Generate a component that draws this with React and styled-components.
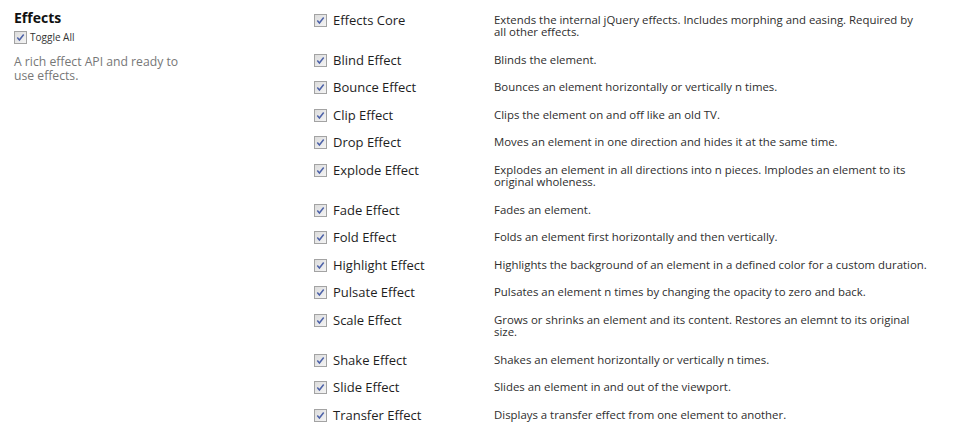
import styled, { createGlobalStyle } from "styled-components";

const GlobalStyle = createGlobalStyle`
  body {
    margin: 0;
    background: #ffffff;
    font-family: "Open Sans", "DejaVu Sans", sans-serif;
    color: #222222;
  }
`;

const Page = styled.div`
  display: grid;
  grid-template-columns: 300px 1fr;
  padding: 6px 0 0 14px;
  width: 960px;
  height: 442px;
  box-sizing: border-box;
`;

const Intro = styled.div`
  display: flex;
  flex-direction: column;
  padding-top: 3px;
`;

const Heading = styled.h2`
  margin: 0;
  font-size: 14px;
  font-weight: 700;
  line-height: 18px;
  color: #111111;
`;

const ToggleLine = styled.label`
  display: flex;
  align-items: center;
  gap: 3px;
  margin-top: 3px;
  font-size: 10px;
  color: #333333;
`;

const Blurb = styled.p`
  margin: 11px 0 0;
  width: 172px;
  font-size: 12.2px;
  line-height: 14px;
  color: #777777;
`;

const List = styled.div`
  display: flex;
  flex-direction: column;
`;

const Row = styled.div`
  display: grid;
  grid-template-columns: 13px 155px 450px;
  column-gap: 6px;
  align-items: start;
  padding: 7.5px 0;
`;

const Label = styled.span`
  font-size: 13px;
  line-height: 12.5px;
  color: #1e1e1e;
  white-space: nowrap;
`;

/* line breaks follow the original page, so they are kept in the data */
const Desc = styled.span`
  font-size: 11.4px;
  line-height: 12.5px;
  color: #2e2e2e;
  white-space: pre-line;
`;

const Box = styled.span`
  display: inline-flex;
  align-items: center;
  justify-content: center;
  width: 13px;
  height: 13px;
  box-sizing: border-box;
  border: 1px solid #a3a3a3;
  background: linear-gradient(135deg, #dcdcdc 0%, #f4f4f4 100%);
  margin-bottom: ${({ $tight }) => ($tight ? "-0.5px" : "0")};
  flex-shrink: 0;
`;

const Check = ({ tight }) => (
  <Box $tight={tight}>
    <svg width="9" height="9" viewBox="0 0 9 9">
      <path d="M1.3 4.6 L3.4 7 L7.7 1.5" fill="none" stroke="#4d62a8" strokeWidth="1.5" />
    </svg>
  </Box>
);

const effects = [
  ["Effects Core", "Extends the internal jQuery effects. Includes morphing and easing. Required by\nall other effects."],
  ["Blind Effect", "Blinds the element."],
  ["Bounce Effect", "Bounces an element horizontally or vertically n times."],
  ["Clip Effect", "Clips the element on and off like an old TV."],
  ["Drop Effect", "Moves an element in one direction and hides it at the same time."],
  ["Explode Effect", "Explodes an element in all directions into n pieces. Implodes an element to its\noriginal wholeness."],
  ["Fade Effect", "Fades an element."],
  ["Fold Effect", "Folds an element first horizontally and then vertically."],
  ["Highlight Effect", "Highlights the background of an element in a defined color for a custom duration."],
  ["Pulsate Effect", "Pulsates an element n times by changing the opacity to zero and back."],
  ["Scale Effect", "Grows or shrinks an element and its content. Restores an elemnt to its original\nsize."],
  ["Shake Effect", "Shakes an element horizontally or vertically n times."],
  ["Slide Effect", "Slides an element in and out of the viewport."],
  ["Transfer Effect", "Displays a transfer effect from one element to another."],
];

const App = () => {
  return (
    <>
      <GlobalStyle />
      <Page>
        <Intro>
          <Heading>Effects</Heading>
          <ToggleLine>
            <Check />
            Toggle All
          </ToggleLine>
          <Blurb>A rich effect API and ready to use effects.</Blurb>
        </Intro>
        <List>
          {effects.map(([name, text]) => (
            <Row key={name}>
              <Check tight />
              <Label>{name}</Label>
              <Desc>{text}</Desc>
            </Row>
          ))}
        </List>
      </Page>
    </>
  );
};

export default App;
